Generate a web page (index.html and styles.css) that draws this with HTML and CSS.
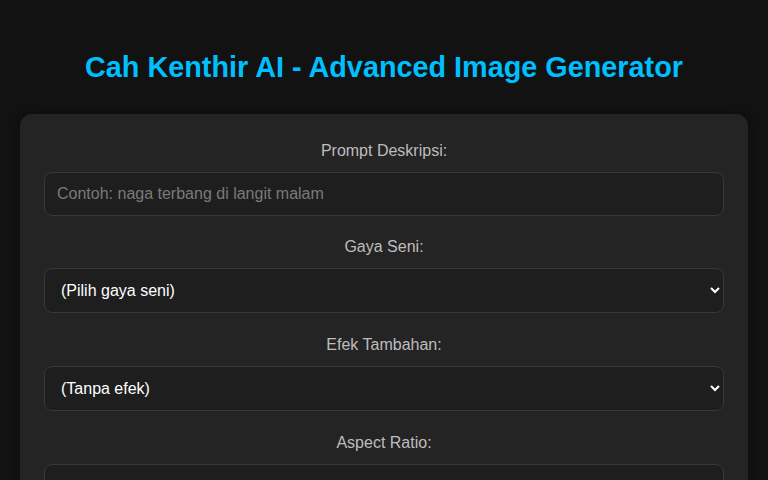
FILE: index.html
```html
<!DOCTYPE html>
<html lang="id">
<head>
<meta charset="utf-8">
<title>Cah Kenthir AI</title>
<link rel="stylesheet" href="styles.css">
</head>
<body>
<h1 class="title">Cah Kenthir AI - Advanced Image Generator</h1>
<div class="card">
  <label class="label" for="prompt">Prompt Deskripsi:</label>
  <input class="field input" id="prompt" type="text" placeholder="Contoh: naga terbang di langit malam">

  <label class="label" for="gaya">Gaya Seni:</label>
  <select class="field select" id="gaya">
    <option>(Pilih gaya seni)</option>
  </select>

  <label class="label" for="efek">Efek Tambahan:</label>
  <select class="field select" id="efek">
    <option>(Tanpa efek)</option>
  </select>

  <label class="label" for="ratio">Aspect Ratio:</label>
  <select class="field select" id="ratio">
    <option>1:1 (Square)</option>
  </select>
</div>
</body>
</html>
```
FILE: styles.css
```css
html, body {
  margin: 0;
  padding: 0;
  background: #121212;
  color: #e0e0e0;
  font-family: "Liberation Sans", Arial, sans-serif;
}
body {
  padding: 20px;
}
.title {
  margin: 30px 0 30px;
  text-align: center;
  color: #00bfff;
  font-size: 28.8px;
  font-weight: bold;
  line-height: 34px;
}
.card {
  background: #242424;
  border-radius: 12px;
  padding: 27px 24px 24px;
  display: flex;
  flex-direction: column;
  box-shadow: 0 0 10px rgba(0,0,0,0.4);
}
.label {
  display: block;
  text-align: center;
  color: #bdbdbd;
  font-size: 16px;
  line-height: 19px;
  margin-bottom: 12px;
}
.field {
  box-sizing: border-box;
  width: 100%;
  background: #1e1e1e;
  border: 1px solid #383838;
  border-radius: 8px;
  color: #ffffff;
  font-family: "Liberation Sans", Arial, sans-serif;
  font-size: 16px;
  margin: 0;
}
.input {
  height: 44px;
  padding: 0 12px;
  margin-bottom: 21px;
}
.input::placeholder {
  color: #7a7a7a;
}
.select {
  height: 45px;
  padding: 0 12px;
  margin-bottom: 22px;
}
```
